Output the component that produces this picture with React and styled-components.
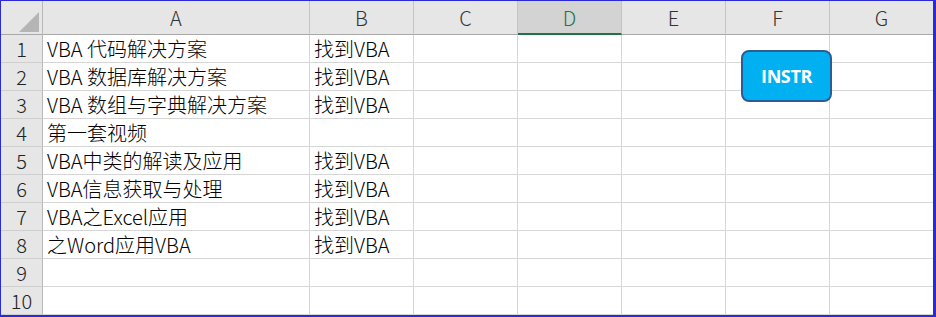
import React from "react";
import styled, { createGlobalStyle } from "styled-components";

const GlobalStyle = createGlobalStyle`
  html, body {
    margin: 0;
    padding: 0;
    background: #ffffff;
  }
`;

const Frame = styled.div`
  position: relative;
  width: 932px;
  height: 314px;
  border-style: solid;
  border-color: #2a2ad8;
  border-width: 1px 3px 2px 1px;
  overflow: hidden;
  background: #ffffff;
  font-family: "Noto Sans CJK SC", "Noto Sans", sans-serif;
`;

const Sheet = styled.div`
  display: grid;
  grid-template-columns: 42px 267px repeat(6, 104px);
  grid-template-rows: 34px repeat(10, 28px);
`;

const Corner = styled.div`
  background: #e6e6e6;
  border-right: 1px solid #b9b9b9;
  border-bottom: 1px solid #a8a8a8;
  display: flex;
  align-items: flex-end;
  justify-content: flex-end;
  padding: 0 3px 2px 0;
`;

const ColHead = styled.div`
  background: ${(p) => (p.$active ? "#d3d3d3" : "#e6e6e6")};
  color: ${(p) => (p.$active ? "#217346" : "#333333")};
  border-right: 1px solid #c4c4c4;
  border-bottom: ${(p) => (p.$active ? "2px solid #217346" : "1px solid #a8a8a8")};
  display: flex;
  align-items: center;
  justify-content: center;
  font-family: "Noto Sans CJK SC", "Noto Sans", sans-serif;
  font-weight: 300;
  font-size: 20px;
  padding-top: ${(p) => (p.$active ? "1px" : "0")};
`;

const RowHead = styled.div`
  background: #e6e6e6;
  color: #222222;
  border-right: 1px solid #b9b9b9;
  border-bottom: 1px solid #cfcfcf;
  display: flex;
  align-items: center;
  justify-content: center;
  font-family: "Noto Sans CJK SC", "Noto Sans", sans-serif;
  font-weight: 300;
  font-size: 20px;
`;

const Cell = styled.div`
  border-right: 1px solid #d6d6d6;
  border-bottom: 1px solid #d6d6d6;
  display: flex;
  align-items: center;
  padding: 1px 0 0 4px;
  font-size: 20px;
  font-weight: 300;
  color: #000000;
  white-space: nowrap;
  overflow: visible;
  line-height: 1;
`;

const ShapeButton = styled.div`
  position: absolute;
  left: 740px;
  top: 49px;
  width: 87px;
  height: 48px;
  border: 2px solid #2e5c97;
  border-radius: 8px;
  background: #00b0f0;
  color: #ffffff;
  display: flex;
  align-items: center;
  justify-content: center;
  font-family: "Open Sans", "Liberation Sans", sans-serif;
  font-weight: 700;
  font-size: 18px;
  letter-spacing: -0.4px;
`;

const columns = ["A", "B", "C", "D", "E", "F", "G"];

const data = [
  ["VBA 代码解决方案", "找到VBA"],
  ["VBA 数据库解决方案", "找到VBA"],
  ["VBA 数组与字典解决方案", "找到VBA"],
  ["第一套视频", ""],
  ["VBA中类的解读及应用", "找到VBA"],
  ["VBA信息获取与处理", "找到VBA"],
  ["VBA之Excel应用", "找到VBA"],
  ["之Word应用VBA", "找到VBA"],
  ["", ""],
  ["", ""],
];

const App = () => {
  return (
    <>
      <GlobalStyle />
      <Frame>
        <Sheet>
          <Corner>
            <svg width="20" height="20" viewBox="0 0 20 20">
              <polygon points="20,0 20,20 0,20" fill="#b5b5b5" />
            </svg>
          </Corner>
          {columns.map((c) => (
            <ColHead key={c} $active={c === "D"}>
              {c}
            </ColHead>
          ))}
          {data.map((row, i) => (
            <React.Fragment key={i}>
              <RowHead>{i + 1}</RowHead>
              {columns.map((c, j) => (
                <Cell key={c}>{row[j] || ""}</Cell>
              ))}
            </React.Fragment>
          ))}
        </Sheet>
        <ShapeButton>INSTR</ShapeButton>
      </Frame>
    </>
  );
};

export default App;
